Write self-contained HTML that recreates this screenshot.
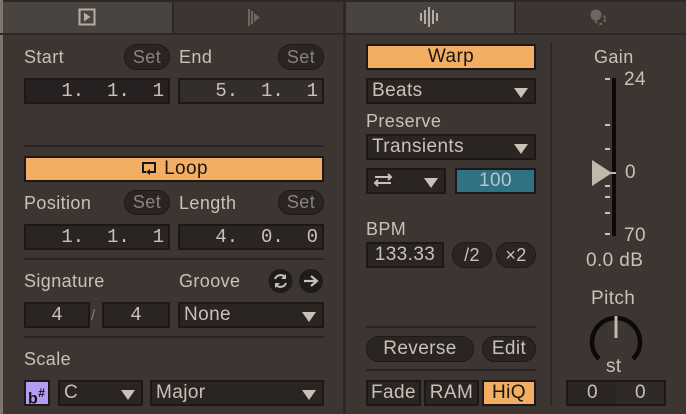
<!DOCTYPE html>
<html><head><style>
*{margin:0;padding:0;box-sizing:border-box}
body{width:686px;height:414px;background:#3c3532;position:relative;overflow:hidden;font-family:"Liberation Sans",sans-serif;color:#c9c0b6;font-size:18px;letter-spacing:0.4px}
.a{position:absolute}
.lab{position:absolute;font-size:18px;line-height:20px;color:#c9c0b6}
.pill{position:absolute;background:#2a2522;border:1px solid #1c1917;border-radius:13px;color:#c9c0b6;text-align:center;font-size:18px}
.set{color:#8a827b}
.fld{position:absolute;background:#2a2523;border:2px solid #1c1816;font-family:"Liberation Mono",monospace;font-size:19px;text-align:right;padding-right:4px;color:#c9c0b6;letter-spacing:0}
.dd{position:absolute;background:#2a2523;border:2px solid #1c1816;padding-left:4px;font-size:19px;color:#c9c0b6}
.dd:after{content:"";position:absolute;right:6px;top:8px;border-left:7px solid transparent;border-right:7px solid transparent;border-top:10px solid #c9c0b6}
.line{position:absolute;height:2px;background:#2a2523}
.btn{position:absolute;border:2px solid #1c1816;text-align:center;font-size:19px}
.tick{position:absolute;left:605px;width:5px;height:2px;background:#c9c0b6}
</style></head><body>
<div class="a" style="left:0;top:0;width:686px;height:2px;background:#2c2826"></div>
<div class="a" style="left:0;top:0;width:3px;height:414px;background:#7d756e"></div>
<div class="a" style="left:3px;top:2px;width:169px;height:31px;background:#4a4440"></div>
<div class="a" style="left:174px;top:2px;width:169px;height:31px;background:#3c3532"></div>
<div class="a" style="left:346px;top:2px;width:168px;height:31px;background:#4a4440"></div>
<div class="a" style="left:516px;top:2px;width:170px;height:31px;background:#3c3532"></div>
<div class="a" style="left:0;top:33px;width:686px;height:2px;background:#2c2826"></div>
<div class="a" style="left:343px;top:0;width:3px;height:414px;background:#2c2826"></div>
<div class="a" style="left:172px;top:0;width:2px;height:35px;background:#2c2826"></div>
<div class="a" style="left:514px;top:0;width:2px;height:35px;background:#2c2826"></div>
<svg class="a" style="left:78px;top:8px" width="20" height="20"><rect x="1.5" y="1.5" width="15" height="15" fill="none" stroke="#b5ada5" stroke-width="2"/><path d="M6 4.5v9l6.5-4.5z" fill="#b5ada5"/></svg>
<svg class="a" style="left:246px;top:8px" width="22" height="20"><rect x="2" y="1" width="2" height="17" fill="#6e6660"/><rect x="5" y="3" width="2" height="13" fill="#6e6660"/><path d="M8 5v9l6-4.5z" fill="#6e6660"/></svg>
<svg class="a" style="left:419px;top:6px" width="24" height="22"><g fill="#b5ada5"><rect x="1" y="7" width="2" height="8"/><rect x="5" y="4" width="2" height="14"/><rect x="9" y="1" width="2" height="20"/><rect x="13" y="4" width="2" height="14"/><rect x="17" y="7" width="2" height="8"/></g></svg>
<svg class="a" style="left:588px;top:6px" width="22" height="22"><circle cx="8" cy="9" r="5.5" fill="#6e6660"/><circle cx="12" cy="13" r="5" fill="none" stroke="#6e6660" stroke-width="2" stroke-dasharray="3 2.5"/></svg>

<div class="lab" style="left:24px;top:47px">Start</div>
<div class="pill set" style="left:124px;top:44px;width:46px;height:26px;line-height:24px">Set</div>
<div class="lab" style="left:179px;top:47px">End</div>
<div class="pill set" style="left:278px;top:44px;width:46px;height:26px;line-height:24px">Set</div>
<div class="fld" style="left:24px;top:78px;width:146px;height:26px;line-height:22px;background:#262120">1.&nbsp;&nbsp;1.&nbsp;&nbsp;1</div>
<div class="fld" style="left:178px;top:78px;width:146px;height:26px;line-height:22px;background:#332e2b">5.&nbsp;&nbsp;1.&nbsp;&nbsp;1</div>
<div class="line" style="left:24px;top:145px;width:300px"></div>
<div class="btn" style="left:24px;top:156px;width:300px;height:26px;line-height:22px;background:#f2ae62;color:#1a1614"><svg width="18" height="16" style="vertical-align:-2px;margin-right:6px"><path d="M6 12H3V3h12v9h-5" fill="none" stroke="#1a1614" stroke-width="2"/><path d="M10 9v6l-4-3z" fill="#1a1614"/></svg>Loop</div>
<div class="lab" style="left:24px;top:193px">Position</div>
<div class="pill set" style="left:124px;top:190px;width:46px;height:25px;line-height:23px">Set</div>
<div class="lab" style="left:179px;top:193px">Length</div>
<div class="pill set" style="left:278px;top:190px;width:46px;height:25px;line-height:23px">Set</div>
<div class="fld" style="left:24px;top:224px;width:146px;height:26px;line-height:22px">1.&nbsp;&nbsp;1.&nbsp;&nbsp;1</div>
<div class="fld" style="left:178px;top:224px;width:146px;height:26px;line-height:22px">4.&nbsp;&nbsp;0.&nbsp;&nbsp;0</div>
<div class="line" style="left:24px;top:258px;width:300px"></div>
<div class="lab" style="left:24px;top:271px">Signature</div>
<div class="lab" style="left:179px;top:271px">Groove</div>
<svg class="a" style="left:268px;top:268px" width="56" height="26"><circle cx="12.5" cy="13" r="12" fill="#1f1b19"/><path d="M7 11a6 6 0 0 1 10-2M18 15a6 6 0 0 1-10 2" fill="none" stroke="#c9c0b6" stroke-width="2"/><path d="M18 6v5h-5zM7 20v-5h5z" fill="#c9c0b6"/><circle cx="43" cy="13" r="12" fill="#1f1b19"/><path d="M36 13h11" stroke="#c9c0b6" stroke-width="2.2"/><path d="M43 8l6 5-6 5" fill="none" stroke="#c9c0b6" stroke-width="2.2"/></svg>
<div class="fld" style="left:24px;top:302px;width:66px;height:26px;line-height:22px;text-align:center;padding:0">4</div>
<div class="lab" style="left:91px;top:306px;font-size:15px;color:#8a827b">/</div>
<div class="fld" style="left:102px;top:302px;width:68px;height:26px;line-height:22px;text-align:center;padding:0">4</div>
<div class="dd" style="left:178px;top:302px;width:146px;height:26px;line-height:22px">None</div>
<div class="line" style="left:24px;top:336px;width:300px"></div>
<div class="lab" style="left:24px;top:349px">Scale</div>
<div class="a" style="left:24px;top:380px;width:26px;height:26px;background:#b49cf5;border:2px solid #1c1816;color:#111;font-weight:bold;font-size:16px;line-height:22px;padding-left:2px">b<sup style="font-size:12px">#</sup></div>
<div class="dd" style="left:58px;top:380px;width:85px;height:26px;line-height:22px">C</div>
<div class="dd" style="left:150px;top:380px;width:174px;height:26px;line-height:22px">Major</div>

<div class="btn" style="left:366px;top:44px;width:170px;height:26px;line-height:22px;background:#f2ae62;color:#1a1614">Warp</div>
<div class="dd" style="left:366px;top:78px;width:170px;height:26px;line-height:22px">Beats</div>
<div class="lab" style="left:366px;top:111px">Preserve</div>
<div class="dd" style="left:366px;top:134px;width:170px;height:26px;line-height:22px">Transients</div>
<div class="dd" style="left:366px;top:168px;width:80px;height:26px;line-height:22px"><svg width="22" height="18" style="vertical-align:-3px"><path d="M3 6h15M16 3l3 3-3 3M19 12H4M6 9l-3 3 3 3" fill="none" stroke="#c9c0b6" stroke-width="2"/></svg></div>
<div class="btn" style="left:455px;top:168px;width:81px;height:26px;line-height:22px;background:#2f7283;color:#b7c6cb">100</div>
<div class="lab" style="left:366px;top:219px">BPM</div>
<div class="btn" style="left:366px;top:242px;width:78px;height:26px;line-height:22px;background:#2a2523">133.33</div>
<div class="pill" style="left:452px;top:242px;width:40px;height:26px;line-height:24px">/2</div>
<div class="pill" style="left:496px;top:242px;width:40px;height:26px;line-height:24px">×2</div>
<div class="line" style="left:366px;top:326px;width:170px"></div>
<div class="pill" style="left:366px;top:336px;width:108px;height:26px;line-height:24px;font-size:19px">Reverse</div>
<div class="pill" style="left:482px;top:336px;width:54px;height:26px;line-height:24px;font-size:19px">Edit</div>
<div class="line" style="left:366px;top:369px;width:170px"></div>
<div class="btn" style="left:366px;top:380px;width:55px;height:26px;line-height:22px;background:#2a2523">Fade</div>
<div class="btn" style="left:424px;top:380px;width:55px;height:26px;line-height:22px;background:#2a2523">RAM</div>
<div class="btn" style="left:482px;top:380px;width:54px;height:26px;line-height:22px;background:#f2ae62;color:#1a1614">HiQ</div>

<div class="a" style="left:550px;top:42px;width:2px;height:364px;background:#2c2826"></div>
<div class="lab" style="left:594px;top:47px">Gain</div>
<div class="a" style="left:612px;top:78px;width:4px;height:158px;background:#0c0a09"></div>
<div class="tick" style="top:78px"></div><div class="tick" style="top:124px"></div><div class="tick" style="top:148px"></div><div class="tick" style="top:185px"></div><div class="tick" style="top:196px"></div><div class="tick" style="top:212px"></div><div class="tick" style="top:233px"></div>
<div class="lab" style="left:624px;top:70px;font-size:19px">24</div>
<svg class="a" style="left:592px;top:160px" width="24" height="26"><path d="M0 0v26l20-13z" fill="#c0b7ad"/><rect x="18" y="12" width="6" height="2" fill="#c0b7ad"/></svg>
<div class="lab" style="left:625px;top:163px;font-size:19px">0</div>
<div class="lab" style="left:624px;top:226px;font-size:19px">70</div>
<div class="lab" style="left:586px;top:251px;font-size:19px">0.0 dB</div>
<div class="lab" style="left:591px;top:289px;font-size:19px">Pitch</div>
<svg class="a" style="left:588px;top:312px" width="56" height="54"><path d="M11 47A24 24 0 1 1 45 47" fill="none" stroke="#0c0a09" stroke-width="4.5"/><path d="M28 4v22" stroke="#c0b7ad" stroke-width="3"/></svg>
<div class="lab" style="left:606px;top:357px;font-size:19px">st</div>
<div class="a" style="left:566px;top:380px;width:100px;height:26px;background:#2a2523;border:2px solid #1c1816"></div>
<div class="a" style="left:616px;top:382px;width:48px;height:22px;background:#2f2a27"></div>
<div class="lab" style="left:587px;top:383px;font-size:19px">0</div>
<div class="lab" style="left:635px;top:383px;font-size:19px">0</div>
</body></html>
